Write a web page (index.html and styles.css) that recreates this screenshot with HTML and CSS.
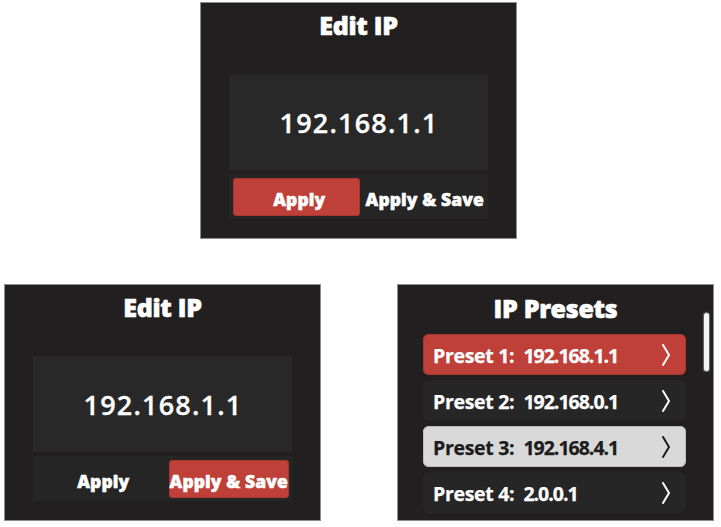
FILE: index.html
```html
<!DOCTYPE html>
<html lang="en">
<head>
<meta charset="utf-8">
<title>IP Settings</title>
<link rel="stylesheet" href="styles.css">
</head>
<body>
<div class="page">
  <div class="top-row">
    <section class="panel">
      <h2 class="title">Edit IP</h2>
      <div class="ip-box">192.168.1.1</div>
      <div class="actions">
        <div class="btn btn-active btn-offset">Apply</div>
        <div class="btn">Apply &amp; Save</div>
      </div>
    </section>
  </div>
  <div class="bottom-row">
    <section class="panel">
      <h2 class="title">Edit IP</h2>
      <div class="ip-box">192.168.1.1</div>
      <div class="actions">
        <div class="btn btn-offset">Apply</div>
        <div class="btn btn-active">Apply &amp; Save</div>
      </div>
    </section>
    <section class="panel presets">
      <h2 class="title title-presets">IP Presets</h2>
      <ul class="list">
        <li class="item item-active"><span class="label">Preset 1:</span><span class="ip">192.168.1.1</span><svg class="chev" viewBox="0 0 8 22" width="8" height="22"><polyline points="1,1 7,11 1,21"/></svg></li>
        <li class="item"><span class="label">Preset 2:</span><span class="ip">192.168.0.1</span><svg class="chev" viewBox="0 0 8 22" width="8" height="22"><polyline points="1,1 7,11 1,21"/></svg></li>
        <li class="item item-focus"><span class="label">Preset 3:</span><span class="ip">192.168.4.1</span><svg class="chev" viewBox="0 0 8 22" width="8" height="22"><polyline points="1,1 7,11 1,21"/></svg></li>
        <li class="item"><span class="label">Preset 4:</span><span class="ip">2.0.0.1</span><svg class="chev" viewBox="0 0 8 22" width="8" height="22"><polyline points="1,1 7,11 1,21"/></svg></li>
      </ul>
      <div class="scrollbar"></div>
    </section>
  </div>
</div>
</body>
</html>
```

FILE: styles.css
```css
* {
  box-sizing: border-box;
}

html, body {
  margin: 0;
  padding: 0;
  background: #ffffff;
}

body {
  font-family: "Open Sans", "Liberation Sans", sans-serif;
  color: #ffffff;
}

.page {
  width: 721px;
  height: 527px;
  padding-top: 2px;
}

.top-row {
  display: flex;
  padding-left: 200px;
}

.bottom-row {
  display: flex;
  gap: 76px;
  padding-left: 4px;
  margin-top: 45px;
}

.panel {
  position: relative;
  width: 317px;
  height: 237px;
  background: #221f20;
  border: 1px solid #8d8d8d;
  display: flex;
  flex-direction: column;
  align-items: center;
}

.title {
  margin: 0;
  height: 46px;
  line-height: 44px;
  font-size: 25px;
  font-weight: 800;
  letter-spacing: -0.3px;
  -webkit-text-stroke: 0.6px #ffffff;
  color: #ffffff;
  text-align: center;
}

.ip-box {
  margin-top: 25px;
  width: 259px;
  height: 96px;
  background: #282828;
  display: flex;
  align-items: center;
  justify-content: center;
  font-size: 27px;
  font-weight: 600;
  letter-spacing: 1.2px;
  -webkit-text-stroke: 0.3px #ffffff;
  padding-left: 1px;
}

.actions {
  margin-top: 4px;
  width: 259px;
  height: 45px;
  background: #252525;
  display: flex;
  gap: 5px;
  padding: 4px 3px 3px 4px;
}

.btn {
  flex: 1;
  border-radius: 4px;
  display: flex;
  align-items: center;
  justify-content: center;
  padding-top: 3px;
  font-size: 17.5px;
  font-weight: 800;
  letter-spacing: 0.1px;
  -webkit-text-stroke: 0.5px #ffffff;
  color: #ffffff;
  white-space: nowrap;
}

.btn-active {
  background: #be4039;
  box-shadow: inset 0 0 0 1px #a8362f;
}

.btn-offset {
  padding-left: 6px;
}

.title-presets {
  height: 49px;
  line-height: 47px;
}

.list {
  list-style: none;
  margin: 0;
  padding: 0;
  width: 263px;
  margin-left: -2px;
  display: flex;
  flex-direction: column;
  gap: 5px;
}

.item {
  height: 41px;
  border-radius: 6px;
  background: #262626;
  display: flex;
  align-items: center;
  padding-left: 10px;
  padding-right: 16px;
  padding-top: 2px;
  font-size: 19.5px;
  font-weight: 700;
  -webkit-text-stroke: 0.25px currentColor;
  color: #ffffff;
  white-space: nowrap;
}

.label {
  letter-spacing: -0.3px;
}

.ip {
  margin-left: 9px;
  letter-spacing: -1px;
  flex: 1;
}

.item-active {
  background: #be4039;
  box-shadow: inset 0 0 0 1px #a8362f;
}

.item-focus {
  background: #d9d9d9;
  color: #1c1c1c;
  box-shadow: inset 0 0 0 1px #bdbdbd;
}

.chev {
  display: block;
  margin-top: -2px;
  fill: none;
  stroke: #ffffff;
  stroke-width: 2;
  stroke-linecap: round;
  stroke-linejoin: round;
}

.item-focus .chev {
  stroke: #1c1c1c;
}

.scrollbar {
  position: absolute;
  left: 306px;
  top: 28px;
  width: 5px;
  height: 58px;
  border-radius: 3px;
  background: #f4f4f4;
  box-shadow: 0 0 1px 1px #6a6a6a;
}
```
